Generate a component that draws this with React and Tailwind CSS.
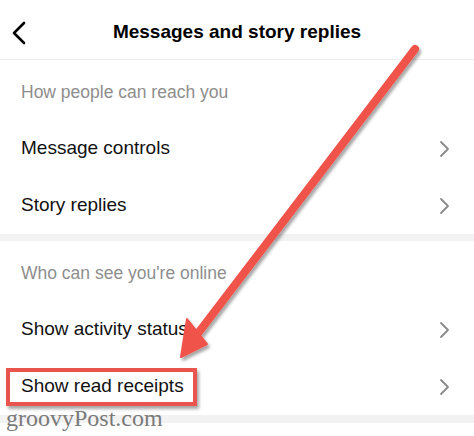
import React from 'react'

const sans = { fontFamily: '"Liberation Sans", Arial, sans-serif' }

function Chevron() {
    return (
        <svg width="12" height="18" viewBox="0 0 12 18" className="shrink-0">
            <polyline points="3,2 10,9 3,16" fill="none" stroke="#8a8a8a" strokeWidth="1.8" strokeLinecap="round" strokeLinejoin="round" />
        </svg>
    )
}

function SectionTitle({ children }) {
    return (
        <div className="h-[60px] flex items-center pt-[4px] px-[21px] text-[17.5px] text-[#8e8e8e]">
            {children}
        </div>
    )
}

function Row({ label }) {
    return (
        <div className="h-[57px] flex items-center justify-between pl-[21px] pr-[24px] text-[19px] text-[#111]">
            <span>{label}</span>
            <Chevron />
        </div>
    )
}

export default function App() {
    return (
        <div className="relative w-[474px] h-[436px] bg-white overflow-hidden" style={sans}>
            {/* top bar */}
            <div className="relative h-[60px] flex items-center justify-center border-b border-[#ececec]">
                <svg width="16" height="24" viewBox="0 0 16 24" className="absolute left-[11px] top-[21px]">
                    <polyline points="13,2 3,12 13,22" fill="none" stroke="#000" strokeWidth="2.6" strokeLinecap="round" strokeLinejoin="round" />
                </svg>
                <span className="text-[19px] font-bold text-black mt-[6px]">Messages and story replies</span>
            </div>

            <SectionTitle>How people can reach you</SectionTitle>
            <Row label="Message controls" />
            <Row label="Story replies" />
            <div className="h-[7px] bg-[#f2f2f2]" />

            <SectionTitle>Who can see you're online</SectionTitle>
            <Row label="Show activity status" />
            <Row label="Show read receipts" />
            <div className="h-[8px] bg-[#f2f2f2]" />

            {/* highlight box around read receipts */}
            <div className="absolute left-[6px] top-[368px] w-[191px] h-[38px] border-[4px] border-[#e9544c] shadow-[2px_3px_3px_rgba(0,0,0,0.35)]" />

            {/* pointer arrow */}
            <svg width="474" height="436" className="absolute left-0 top-0 pointer-events-none">
                <defs>
                    <filter id="drop" x="-20%" y="-20%" width="140%" height="140%">
                        <feDropShadow dx="2" dy="3" stdDeviation="1.6" floodColor="#000" floodOpacity="0.35" />
                    </filter>
                </defs>
                <g filter="url(#drop)">
                    <line x1="415" y1="49" x2="199" y2="332" stroke="#f0524a" strokeWidth="8" strokeLinecap="round" />
                    <polygon points="181,357 187,319 207,344" fill="#f0524a" stroke="#f0524a" strokeWidth="2" strokeLinejoin="round" />
                </g>
            </svg>

            <div className="absolute left-[6px] top-[403px] text-[24px] leading-[30px] text-[#7a7a7a]" style={{ fontFamily: '"Liberation Serif", "Times New Roman", serif' }}>
                groovyPost.com
            </div>
        </div>
    )
}
